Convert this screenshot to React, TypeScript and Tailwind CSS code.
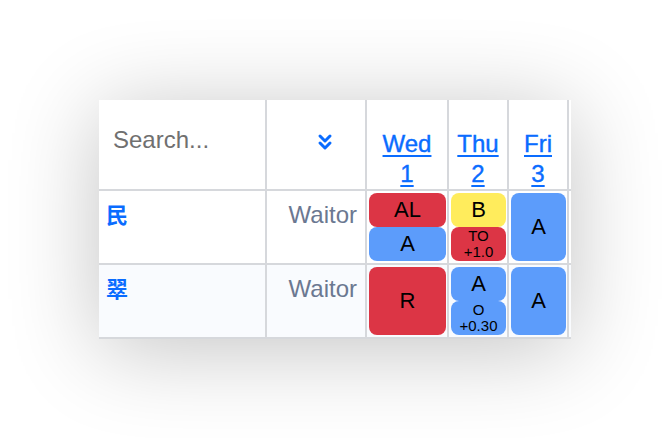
import React from 'react';
import { ChevronsDown } from 'lucide-react';

type Block = { label: string; sub?: string; color: string };

const RED = 'bg-[#dc3545]';
const BLUE = 'bg-[#5c9cfb]';
const YELLOW = 'bg-[#ffec5c]';

const days = [
  { name: 'Wed', num: '1', w: 'w-[82px]' },
  { name: 'Thu', num: '2', w: 'w-[60px]' },
  { name: 'Fri', num: '3', w: 'w-[60px]' },
];

const rows: { name: string; role: string; alt?: boolean; cells: Block[][] }[] = [
  {
    name: '民',
    role: 'Waitor',
    cells: [
      [
        { label: 'AL', color: RED },
        { label: 'A', color: BLUE },
      ],
      [
        { label: 'B', color: YELLOW },
        { label: 'TO', sub: '+1.0', color: RED },
      ],
      [{ label: 'A', color: BLUE }],
    ],
  },
  {
    name: '翠',
    role: 'Waitor',
    alt: true,
    cells: [
      [{ label: 'R', color: RED }],
      [
        { label: 'A', color: BLUE },
        { label: 'O', sub: '+0.30', color: BLUE },
      ],
      [{ label: 'A', color: BLUE }],
    ],
  },
];

const line = 'border-[#d6d8dc]';

function ShiftBlock({ b }: { b: Block }) {
  return (
    <div
      className={`${b.color} flex-1 rounded-[8px] flex flex-col items-center justify-center text-black`}
    >
      {b.sub ? (
        <>
          <span className="text-[15px] leading-[16px]">{b.label}</span>
          <span className="text-[15px] leading-[16px]">{b.sub}</span>
        </>
      ) : (
        <span className="text-[22px] leading-none">{b.label}</span>
      )}
    </div>
  );
}

export default function App() {
  return (
    <div
      className="min-h-screen bg-white flex items-center justify-center"
      style={{ fontFamily: '"Liberation Sans", Arial, "Noto Sans CJK SC", sans-serif' }}
    >
      <div className="w-[472px] h-[239px] overflow-hidden bg-white shadow-[0_10px_90px_rgba(0,0,0,0.24)]">
        {/* Header */}
        <div className={`flex h-[91px] border-b-2 ${line}`}>
          <div className="w-[166px] shrink-0 flex items-center pl-[14px] pb-[8px]">
            <input
              placeholder="Search..."
              className="w-full bg-transparent outline-none text-[24px] text-gray-800 placeholder:text-[#707070]"
            />
          </div>
          <div
            className={`w-[100px] shrink-0 border-l-2 ${line} flex items-center justify-end pr-[28px] pb-[5px]`}
          >
            <ChevronsDown className="w-[24px] h-[24px] text-[#0a6cff]" strokeWidth={3} />
          </div>
          {days.map((d) => (
            <div
              key={d.name}
              className={`${d.w} shrink-0 border-l-2 ${line} flex items-end justify-center`}
            >
              <a
                href="#"
                className="text-[#0a6cff] text-[24px] leading-[30px] text-center underline decoration-2 underline-offset-[3px] [-webkit-text-stroke:0.4px_#0a6cff]"
              >
                {d.name}
                <br />
                {d.num}
              </a>
            </div>
          ))}
          <div className={`w-[40px] shrink-0 border-l-2 ${line} pl-[2px] pt-[2px] flex flex-col`}>
            <div className={`${RED} h-[25px] rounded-[6px]`} />
            <div className="h-[24px] bg-[#fbf3e4]" />
          </div>
        </div>

        {/* Rows */}
        {rows.map((r) => (
          <div
            key={r.name}
            className={`flex h-[74px] border-b-2 ${line} ${r.alt ? 'bg-[#f9fbfe]' : 'bg-white'}`}
          >
            <div className="w-[166px] shrink-0 pl-[7px] pt-[4px]">
              <span
                className="text-[#0a6cff] text-[22px] font-bold leading-[36px]"
                style={{ fontFamily: '"Noto Sans CJK SC", sans-serif' }}
              >
                {r.name}
              </span>
            </div>
            <div
              className={`w-[100px] shrink-0 border-l-2 ${line} text-right pr-[8px] pt-[6px] text-[24px] leading-[36px] text-[#6b7891]`}
            >
              {r.role}
            </div>
            {r.cells.map((c, i) => (
              <div
                key={i}
                className={`${days[i].w} shrink-0 border-l-2 ${line} pl-[2px] pr-[1px] py-[2px] flex flex-col`}
              >
                {c.map((b, j) => (
                  <ShiftBlock key={j} b={b} />
                ))}
              </div>
            ))}
            <div className={`w-[40px] shrink-0 border-l-2 ${line}`} />
          </div>
        ))}
        <div className="flex h-[20px]">
          <div className="w-[166px] shrink-0" />
          <div className={`w-[100px] shrink-0 border-l-2 ${line}`} />
          <div className={`w-[82px] shrink-0 border-l-2 ${line}`} />
        </div>
      </div>
    </div>
  );
}
